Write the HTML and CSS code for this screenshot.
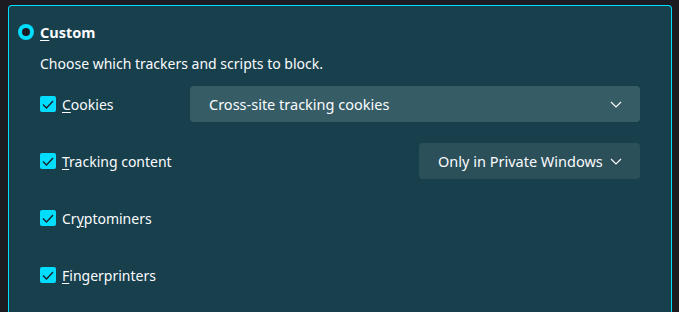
FILE: index.html
```html
<!DOCTYPE html>
<html>
<head>
<meta charset="utf-8">
<link rel="stylesheet" href="styles.css">
</head>
<body>
<div class="box">
  <div class="header">
    <span class="radio"><span class="dot"></span></span>
    <span class="title"><u>C</u>ustom</span>
  </div>
  <div class="desc">Choose which trackers and scripts to block.</div>
  <div class="rows">
    <div class="row">
      <span class="check"><svg viewBox="0 0 16 16" width="16" height="16"><polyline points="3,8.5 6.5,12 13,5" fill="none" stroke="#1c1b22" stroke-width="1.3"/></svg></span>
      <span class="label"><u>C</u>ookies</span>
      <div class="select wide"><span>Cross-site tracking cookies</span><svg class="chev" viewBox="0 0 12 12" width="12" height="12"><polyline points="1,4 6,9 11,4" fill="none" stroke="#fbfbfe" stroke-width="1.2"/></svg></div>
    </div>
    <div class="row">
      <span class="check"><svg viewBox="0 0 16 16" width="16" height="16"><polyline points="3,8.5 6.5,12 13,5" fill="none" stroke="#1c1b22" stroke-width="1.3"/></svg></span>
      <span class="label"><u>T</u>racking content</span>
      <div class="select narrow"><span>Only in Private Windows</span><svg class="chev" viewBox="0 0 12 12" width="12" height="12"><polyline points="1,4 6,9 11,4" fill="none" stroke="#fbfbfe" stroke-width="1.2"/></svg></div>
    </div>
    <div class="row">
      <span class="check"><svg viewBox="0 0 16 16" width="16" height="16"><polyline points="3,8.5 6.5,12 13,5" fill="none" stroke="#1c1b22" stroke-width="1.3"/></svg></span>
      <span class="label">Cr<u>y</u>ptominers</span>
    </div>
    <div class="row">
      <span class="check"><svg viewBox="0 0 16 16" width="16" height="16"><polyline points="3,8.5 6.5,12 13,5" fill="none" stroke="#1c1b22" stroke-width="1.3"/></svg></span>
      <span class="label"><u>F</u>ingerprinters</span>
    </div>
  </div>
</div>
</body>
</html>
```
FILE: styles.css
```css
html, body {
  margin: 0;
  padding: 0;
  background: #1c1b22;
  overflow: hidden;
  height: 312px;
}
body {
  padding: 5px 0 0 8px;
  box-sizing: border-box;
  font-family: "Noto Sans", "Open Sans", sans-serif;
  color: #fbfbfe;
  font-size: 14px;
}
.box {
  width: 664px;
  height: 307px;
  border: 1px solid #00ddff;
  border-bottom: none;
  border-radius: 4px 4px 0 0;
  background: #17404c;
  padding: 0 0 0 9px;
  box-sizing: border-box;
}
.header {
  display: flex;
  align-items: center;
  height: 24px;
  margin-top: 14px;
}
.radio {
  width: 16px;
  height: 16px;
  border-radius: 50%;
  background: #00ddff;
  display: flex;
  align-items: center;
  justify-content: center;
  margin-right: 6px;
}
.dot {
  width: 8px;
  height: 8px;
  border-radius: 50%;
  background: #1c1b22;
}
.title {
  font-weight: 700;
  font-size: 14.5px;
}
u {
  text-decoration-thickness: 1px;
  text-underline-offset: 2px;
}
.desc {
  margin: 10px 0 0 22px;
  height: 20px;
  line-height: 20px;
}
.rows {
  margin: 12px 0 0 22px;
  display: flex;
  flex-direction: column;
  gap: 21px;
  padding-right: 31px;
}
.row {
  display: flex;
  align-items: center;
  height: 36px;
}
.check {
  width: 16px;
  height: 16px;
  border-radius: 2px;
  background: #00ddff;
  display: flex;
  margin-right: 6px;
}
.label {
  flex: 0 0 auto;
}
.select {
  margin-left: auto;
  height: 36px;
  border-radius: 4px;
  display: flex;
  align-items: center;
  box-sizing: border-box;
  padding: 0 18px 0 19px;
  font-size: 14.5px;
}
.select span {
  flex: 1;
}
.wide {
  width: 450px;
  background: #365d66;
}
.narrow {
  width: 221px;
  background: #2b5059;
}
.chev {
  margin-left: 5px;
}
```
